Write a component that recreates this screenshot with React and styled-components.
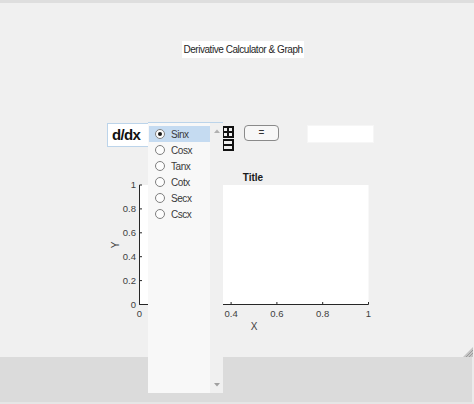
import React from "react";
import styled, { createGlobalStyle } from "styled-components";

const GlobalStyle = createGlobalStyle`
  html, body { margin: 0; padding: 0; background: #f0f0f0; }
  body { font-family: "Liberation Sans", Arial, sans-serif; color: #262626; }
`;

const Window = styled.div`
  width: 474px;
  height: 404px;
  display: flex;
  flex-direction: column;
  overflow: hidden;
  background: #f0f0f0;
`;

const TopEdge = styled.div`
  flex: none;
  height: 3px;
  background: #dedede;
`;

const Canvas = styled.div`
  position: relative;
  flex: none;
  height: 354px;
  background: #f0f0f0;
  display: flex;
  flex-direction: column;
  align-items: flex-start;
`;

const StatusStrip = styled.div`
  flex: 1;
  background: #dbdbdb;
  border-right: 2px solid #ebebeb;
  border-bottom: 2px solid #e6e6e6;
`;

const TitleLabel = styled.div`
  margin: 38px 0 0 182px;
  width: 122px;
  height: 17px;
  background: #ffffff;
  font-size: 10px;
  letter-spacing: -0.45px;
  line-height: 17px;
  text-align: center;
  color: #262626;
`;

const ControlsRow = styled.div`
  display: flex;
  align-items: flex-start;
  margin: 65px 0 0 107px;
`;

const DdxField = styled.div`
  box-sizing: border-box;
  width: 41px;
  height: 24px;
  background: #ffffff;
  border: 1px solid #bcd4ea;
  border-right: none;
  padding-left: 4px;
  font-size: 15px;
  font-weight: bold;
  letter-spacing: -0.7px;
  line-height: 22px;
  color: #111;
`;

const ListAnchor = styled.div`
  position: relative;
  width: 74px;
  height: 24px;
`;

const OptionList = styled.div`
  position: absolute;
  z-index: 2;
  top: -1px;
  left: 0;
  width: 75px;
  height: 271px;
  box-sizing: border-box;
  background: #f8f8f8;
  border-top: 1px solid #bcd4ea;
  display: flex;
`;

const Items = styled.div`
  flex: 1;
  padding-top: 3px;
  display: flex;
  flex-direction: column;
`;

const OptionRow = styled.div`
  height: 16px;
  margin-left: 1px;
  padding-left: 6px;
  display: flex;
  align-items: center;
  gap: 6px;
  background: ${(p) => (p.$selected ? "#c5dbf1" : "transparent")};
  font-size: 10px;
  letter-spacing: -0.45px;
  color: #3a3a3a;
`;

const Radio = styled.span`
  box-sizing: border-box;
  width: 10px;
  height: 10px;
  border-radius: 50%;
  border: 1px solid #7f7f7f;
  background: #fdfdfd;
  display: flex;
  align-items: center;
  justify-content: center;
  &::after {
    content: "";
    width: 4px;
    height: 4px;
    border-radius: 50%;
    background: ${(p) => (p.$checked ? "#1a1a1a" : "transparent")};
  }
`;

const ScrollTrack = styled.div`
  width: 13px;
  background: #f0f0f0;
  display: flex;
  flex-direction: column;
  justify-content: space-between;
  align-items: center;
  padding: 6px 0 6px;
`;

const SpinColumn = styled.div`
  margin-top: 3px;
  display: flex;
  flex-direction: column;
  gap: 1px;
`;

const EqButton = styled.button`
  margin: 2px 0 0 10px;
  box-sizing: border-box;
  width: 35px;
  height: 16px;
  padding: 0;
  border: 1px solid #8a8a8a;
  border-radius: 4px;
  background: #f7f7f7;
  font-family: "Liberation Sans", Arial, sans-serif;
  font-size: 10px;
  line-height: 14px;
  color: #333;
`;

const OutputField = styled.div`
  margin: 2px 0 0 28px;
  box-sizing: border-box;
  width: 67px;
  height: 18px;
  background: #ffffff;
  border: 1px solid #f6f6f6;
`;

const ChartBox = styled.svg`
  display: block;
  margin: 17px 0 0 100px;
  width: 280px;
  height: 170px;
  font-family: "Liberation Sans", Arial, sans-serif;
`;

const Grip = styled.svg`
  position: absolute;
  right: 1px;
  bottom: 0;
  width: 10px;
  height: 10px;
`;

const options = ["Sinx", "Cosx", "Tanx", "Cotx", "Secx", "Cscx"];

const PlusIcon = () => (
  <svg width="12" height="12" viewBox="0 0 12 12">
    <rect x="1" y="1" width="10" height="10" fill="#f0f0f0" stroke="#111" strokeWidth="2" />
    <line x1="6" y1="1" x2="6" y2="11" stroke="#111" strokeWidth="2" />
    <line x1="1" y1="6" x2="11" y2="6" stroke="#111" strokeWidth="2" />
  </svg>
);

const MinusIcon = () => (
  <svg width="12" height="12" viewBox="0 0 12 12">
    <rect x="1" y="1" width="10" height="10" fill="#f0f0f0" stroke="#111" strokeWidth="2" />
    <line x1="1" y1="6" x2="11" y2="6" stroke="#111" strokeWidth="2" />
  </svg>
);

const ArrowUp = () => (
  <svg width="6" height="4" viewBox="0 0 6 4">
    <path d="M0 4 L3 0.5 L6 4 Z" fill="#b0b0b0" />
  </svg>
);

const ArrowDown = () => (
  <svg width="6" height="4" viewBox="0 0 6 4">
    <path d="M0 0 L3 3.5 L6 0 Z" fill="#a0a0a0" />
  </svg>
);

const X0 = 39.5, X1 = 268.5, Y0 = 136.5, Y1 = 17;
const ticks = [0, 0.2, 0.4, 0.6, 0.8, 1];
const tx = (v) => X0 + v * (X1 - X0);
const ty = (v) => Y0 - v * (Y0 - Y1);

const Chart = () => (
  <ChartBox viewBox="0 0 280 170">
    <text x="153" y="13" fontSize="10" fontWeight="bold" fill="#1a1a1a" textAnchor="middle">Title</text>
    <rect x={X0} y={Y1} width={X1 - X0} height={Y0 - Y1} fill="#ffffff" />
    <line x1={X0} y1={Y1} x2={X0} y2={Y0} stroke="#262626" strokeWidth="1" />
    <line x1={X0} y1={Y0} x2={X1} y2={Y0} stroke="#262626" strokeWidth="1" />
    {ticks.map((v) => (
      <g key={"y" + v}>
        <line x1={X0} y1={ty(v)} x2={X0 + 2.5} y2={ty(v)} stroke="#262626" strokeWidth="1" />
        <text x="36" y={ty(v) + 3.3} fontSize="9.5" fill="#404040" textAnchor="end">{v}</text>
      </g>
    ))}
    {ticks.map((v) => (
      <g key={"x" + v}>
        <line x1={tx(v)} y1={Y0} x2={tx(v)} y2={Y0 - 2.5} stroke="#262626" strokeWidth="1" />
        <text x={tx(v)} y="148.5" fontSize="9.5" fill="#404040" textAnchor="middle">{v}</text>
      </g>
    ))}
    <text x="154" y="161.5" fontSize="10" fill="#404040" textAnchor="middle">X</text>
    <text transform="translate(18.5 77) rotate(-90)" fontSize="10" fill="#404040" textAnchor="middle">Y</text>
  </ChartBox>
);

export default function App() {
  return (
    <>
      <GlobalStyle />
      <Window>
        <TopEdge />
        <Canvas>
          <TitleLabel>Derivative Calculator &amp; Graph</TitleLabel>
          <ControlsRow>
            <DdxField>d/dx</DdxField>
            <ListAnchor>
              <OptionList>
                <Items>
                  {options.map((o, i) => (
                    <OptionRow key={o} $selected={i === 0}>
                      <Radio $checked={i === 0} />
                      {o}
                    </OptionRow>
                  ))}
                </Items>
                <ScrollTrack>
                  <ArrowUp />
                  <ArrowDown />
                </ScrollTrack>
              </OptionList>
            </ListAnchor>
            <SpinColumn>
              <PlusIcon />
              <MinusIcon />
            </SpinColumn>
            <EqButton>=</EqButton>
            <OutputField />
          </ControlsRow>
          <Chart />
          <Grip viewBox="0 0 10 10">
            <path d="M10 0 L10 10 L0 10 Z" fill="#c4c4c4" />
            <path d="M3 10 L10 3 M6 10 L10 6" stroke="#9a9a9a" strokeWidth="1" />
          </Grip>
        </Canvas>
        <StatusStrip />
      </Window>
    </>
  );
}
